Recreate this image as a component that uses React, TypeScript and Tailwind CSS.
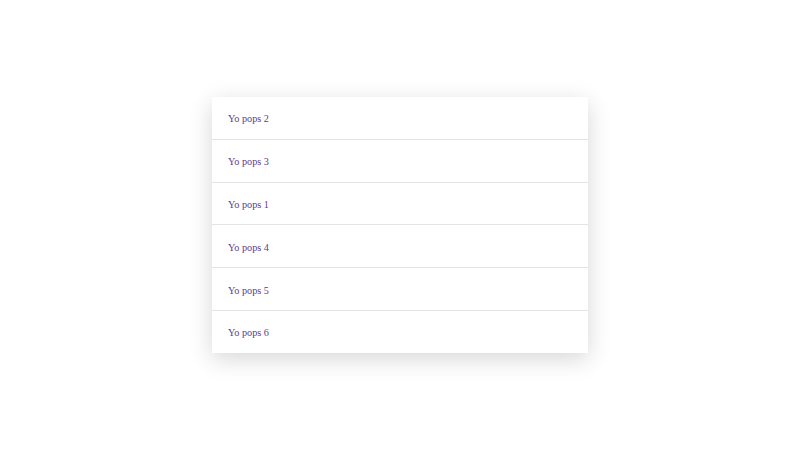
import React from 'react';

const items = ['Yo pops 2', 'Yo pops 3', 'Yo pops 1', 'Yo pops 4', 'Yo pops 5', 'Yo pops 6'];

export default function App() {
  return (
    <div className="w-[800px] h-[450px] bg-white flex items-start justify-center pt-[97px]">
      {/* draggable list */}
      <ul className="w-[376px] h-[256px] flex flex-col bg-white shadow-[0_6px_22px_rgba(0,0,0,0.16)]">
        {items.map((item, i) => (
          <li
            key={item}
            className={
              'flex-1 flex items-center px-4 pt-[2px] text-[10.2px] text-[#5e3a8e] font-["Liberation_Serif",serif]' +
              (i > 0 ? ' border-t border-[#e4e4e4]' : '')
            }
          >
            {item}
          </li>
        ))}
      </ul>
    </div>
  );
}
